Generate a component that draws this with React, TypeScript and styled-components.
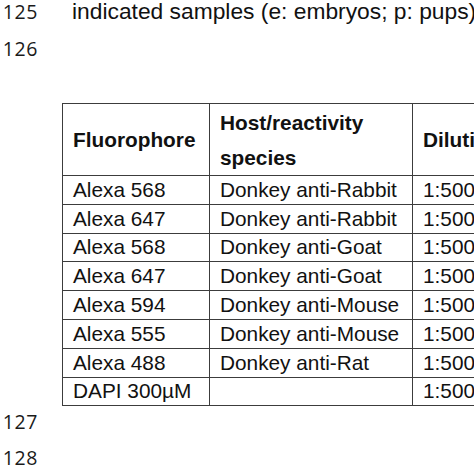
import React from "react";
import styled, { createGlobalStyle } from "styled-components";

const Global = createGlobalStyle`
  html, body { margin: 0; padding: 0; background: #fff; }
  body { width: 474px; height: 474px; overflow: hidden; }
`;

const Page = styled.div`
  display: flex;
  flex-direction: column;
  width: 474px;
  height: 474px;
  overflow: hidden;
  color: #111;
`;

const Line = styled.div<{ $mt: number }>`
  display: flex;
  align-items: baseline;
  height: 22px;
  line-height: 22px;
  margin-top: ${(p) => p.$mt}px;
  white-space: nowrap;
`;

const LineNo = styled.div`
  flex: 0 0 38px;
  width: 38px;
  display: flex;
  justify-content: flex-end;
  font-family: "Open Sans", "Liberation Sans", sans-serif;
  font-size: 19.5px;
  letter-spacing: 0.6px;
  color: #1a1a1a;
`;

const LineText = styled.div`
  margin-left: 34px;
  font-family: "Liberation Sans", Arial, sans-serif;
  font-size: 22.8px;
  color: #111;
`;

const TableWrap = styled.div`
  margin-top: 43px;
  padding-left: 62px;
  display: flex;
`;

const Table = styled.table`
  border-collapse: collapse;
  font-family: "Liberation Sans", Arial, sans-serif;
  font-size: 20.8px;
  color: #111;
  flex: 0 0 auto;
`;

const Th = styled.th<{ $w: number }>`
  width: ${(p) => p.$w}px;
  min-width: ${(p) => p.$w}px;
  box-sizing: border-box;
  border: 1.5px solid #3c3c3c;
  text-align: left;
  font-weight: bold;
  padding: 0 10px 0 10px;
  height: 72px;
  line-height: 35px;
  vertical-align: middle;
  white-space: nowrap;
`;

const Td = styled.td`
  border: 1.5px solid #3c3c3c;
  padding: 0 10px 0 10px;
  height: 28.8px;
  line-height: 26px;
  box-sizing: border-box;
  white-space: nowrap;
  vertical-align: middle;
`;

const rows: [string, string, string][] = [
  ["Alexa 568", "Donkey anti-Rabbit", "1:5000"],
  ["Alexa 647", "Donkey anti-Rabbit", "1:5000"],
  ["Alexa 568", "Donkey anti-Goat", "1:5000"],
  ["Alexa 647", "Donkey anti-Goat", "1:5000"],
  ["Alexa 594", "Donkey anti-Mouse", "1:5000"],
  ["Alexa 555", "Donkey anti-Mouse", "1:5000"],
  ["Alexa 488", "Donkey anti-Rat", "1:5000"],
  ["DAPI 300\u00b5M", "", "1:5000"],
];

export default function App() {
  return (
    <>
      <Global />
      <Page>
        <Line $mt={0}>
          <LineNo>1125</LineNo>
          <LineText>indicated samples (e: embryos; p: pups)</LineText>
        </Line>
        <Line $mt={16}>
          <LineNo>1126</LineNo>
        </Line>
        <TableWrap>
          <Table>
            <thead>
              <tr>
                <Th $w={147}>Fluorophore</Th>
                <Th $w={203}>
                  Host/reactivity
                  <br />
                  species
                </Th>
                <Th $w={110}>Dilution</Th>
              </tr>
            </thead>
            <tbody>
              {rows.map((r, i) => (
                <tr key={i}>
                  <Td>{r[0]}</Td>
                  <Td>{r[1]}</Td>
                  <Td>{r[2]}</Td>
                </tr>
              ))}
            </tbody>
          </Table>
        </TableWrap>
        <Line $mt={5}>
          <LineNo>1127</LineNo>
        </Line>
        <Line $mt={14}>
          <LineNo>1128</LineNo>
        </Line>
      </Page>
    </>
  );
}
